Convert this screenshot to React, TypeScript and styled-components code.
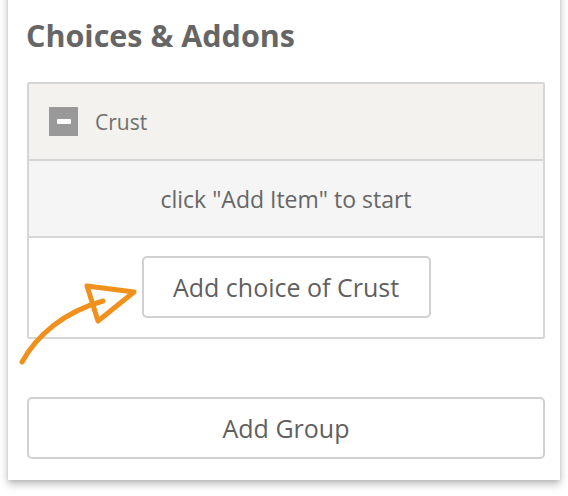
import React from "react";
import styled, { createGlobalStyle } from "styled-components";

const Global = createGlobalStyle`
  html, body { margin: 0; padding: 0; background: #ffffff; }
  body { font-family: "Open Sans", "Noto Sans", Arial, sans-serif; overflow: hidden; }
  * { box-sizing: border-box; }
`;

const Page = styled.div`
  width: 568px;
  height: 496px;
  overflow: hidden;
  background: #fff;
`;

const Card = styled.div`
  position: relative;
  margin: -20px 0 0 8px;
  width: 552px;
  height: 500px;
  background: #fff;
  box-shadow: 0 4px 8px rgba(0, 0, 0, 0.28), 0 0 3px rgba(0, 0, 0, 0.08);
  padding: 34px 15px 0 19px;
`;

const Title = styled.h2`
  margin: 0 0 0 -1px;
  font-size: 30.5px;
  line-height: 42px;
  font-weight: 700;
  color: #666;
  letter-spacing: 0;
`;

const Group = styled.div`
  margin-top: 26px;
  border: 2px solid #d6d6d6;
  border-radius: 2px;
  background: #fff;
`;

const HeaderRow = styled.div`
  display: flex;
  align-items: center;
  gap: 17px;
  height: 77px;
  padding: 0 0 0 20px;
  background: #f3f2ee;
  border-bottom: 2px solid #d6d6d6;
`;

const Collapse = styled.span`
  width: 29px;
  height: 29px;
  background: #999;
  display: flex;
  align-items: center;
  justify-content: center;
  &::after {
    content: "";
    width: 14px;
    height: 5px;
    border-radius: 1px;
    background: #fff;
  }
`;

const GroupName = styled.span`
  font-size: 21px;
  color: #6f6f6f;
`;

const EmptyRow = styled.div`
  height: 77px;
  display: flex;
  align-items: center;
  justify-content: center;
  background: #f5f5f5;
  border-bottom: 2px solid #d6d6d6;
  font-size: 23px;
  color: #666;
`;

const ActionRow = styled.div`
  height: 99px;
  display: flex;
  justify-content: center;
  padding-top: 18px;
`;

const Button = styled.button<{ $wide?: boolean }>`
  font-family: "Open Sans", "Noto Sans", Arial, sans-serif;
  font-size: 25px;
  color: #5f5f5f;
  background: #fff;
  border: 2px solid #d0d0d0;
  border-radius: 5px;
  height: 62px;
  width: ${(p) => (p.$wide ? "100%" : "289px")};
  padding: 0;
  display: block;
`;

const Arrow = styled.svg`
  position: absolute;
  left: 11px;
  top: 300px;
  overflow: visible;
`;

const BottomArea = styled.div`
  margin-top: 58px;
`;

export default function App() {
  return (
    <Page>
      <Global />
      <Card>
        <Title>Choices &amp; Addons</Title>
        <Group>
          <HeaderRow>
            <Collapse />
            <GroupName>Crust</GroupName>
          </HeaderRow>
          <EmptyRow>click "Add Item" to start</EmptyRow>
          <ActionRow>
            <Button>Add choice of Crust</Button>
          </ActionRow>
        </Group>
        <Arrow width="125" height="90" viewBox="0 0 125 90">
          <path
            d="M3 82 C 18 55, 45 32, 84 21"
            fill="none"
            stroke="#f0911e"
            strokeWidth="5"
            strokeLinecap="round"
          />
          <path
            d="M68 6 L 115 12 L 79 41 Z"
            fill="none"
            stroke="#f0911e"
            strokeWidth="5"
            strokeLinejoin="round"
          />
        </Arrow>
        <BottomArea>
          <Button $wide>Add Group</Button>
        </BottomArea>
      </Card>
    </Page>
  );
}
